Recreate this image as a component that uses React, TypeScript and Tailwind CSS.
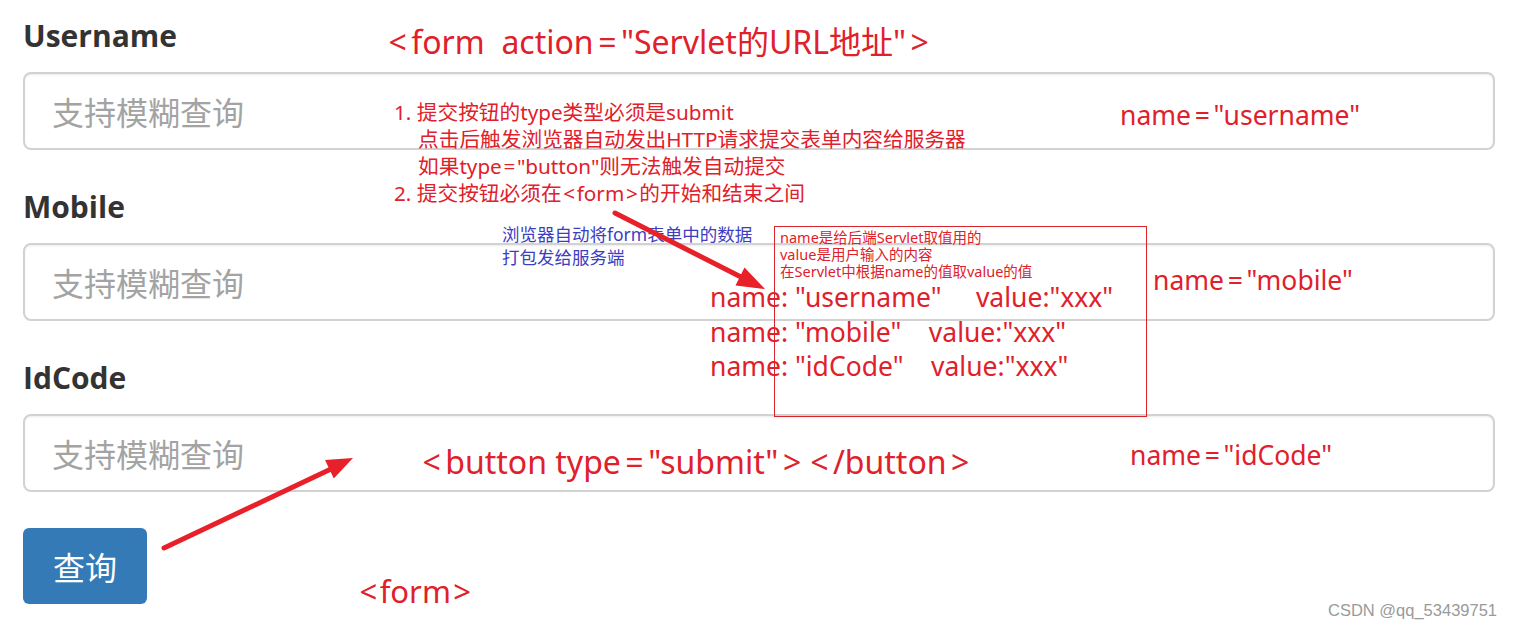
import React from 'react';

const RED = 'text-[#e0202a]';
const note = "[font-family:'Noto_Sans','Noto_Sans_CJK_SC',sans-serif]";

const fields = ['Username', 'Mobile', 'IdCode'];

function S({ c, wide }: { c: string; wide?: boolean }) {
  return <span className={wide ? 'mx-[0.14em]' : 'mx-[0.08em]'}>{c}</span>;
}

function Field({ label }: { label: string }) {
  return (
    <div>
      <label className="block h-[36px] mb-[18px] text-[30px] leading-[36px] font-bold text-[#333] [font-family:'Open_Sans',sans-serif]">
        {label}
      </label>
      <input
        type="text"
        placeholder="支持模糊查询"
        className="block w-full h-[78px] rounded-[8px] border-2 border-[#d2d2d2] bg-white pl-[27px] text-[32px] text-[#555] placeholder:text-[#a3a3a3] shadow-[inset_0_1px_2px_rgba(0,0,0,0.08)] outline-none [font-family:'Noto_Sans_CJK_SC',sans-serif]"
      />
    </div>
  );
}

function Arrows() {
  return (
    <svg className="absolute inset-0 pointer-events-none" width="1514" height="629">
      <line x1="615" y1="213" x2="741" y2="277" stroke="#e8202a" strokeWidth="5" strokeLinecap="round" />
      <polygon points="765,289 735.5,285.5 744.5,267.5" fill="#e8202a" />
      <line x1="164" y1="548" x2="331" y2="469" stroke="#e8202a" strokeWidth="5" strokeLinecap="round" />
      <polygon points="353,458 333.8,478.5 325,460" fill="#e8202a" />
    </svg>
  );
}

function NameTag({ name, className }: { name: string; className: string }) {
  return (
    <div className={`absolute text-[26.5px] leading-[36px] ${RED} ${note} ${className}`}>
      name<S c="=" wide />"{name}"
    </div>
  );
}

export default function App() {
  return (
    <div className="relative w-[1514px] h-[629px] bg-white overflow-hidden">
      {/* the form itself */}
      <form className="pl-[23px] pr-[19px] pt-[18px] flex flex-col gap-[39px]">
        {fields.map((f) => (
          <Field key={f} label={f} />
        ))}
        <div className="-mt-[3px]">
          <button
            type="submit"
            className="w-[124px] h-[76px] rounded-[6px] bg-[#337ab7] text-white text-[32px] [font-family:'Noto_Sans_CJK_SC',sans-serif]"
          >
            查询
          </button>
        </div>
      </form>

      {/* annotations drawn over the screenshot */}
      <div className={`absolute left-[384px] top-[21px] text-[32px] leading-[42px] whitespace-pre ${RED} ${note}`}>
        <S c="<" wide />form  action<S c="=" wide />"Servlet的URL地址"<S c=">" wide />
      </div>

      <div className={`absolute left-[394px] top-[99px] text-[20.7px] leading-[27px] whitespace-pre ${RED} ${note}`}>
        <div>1. 提交按钮的type类型必须是submit</div>
        <div className="pl-[24px]">点击后触发浏览器自动发出HTTP请求提交表单内容给服务器</div>
        <div className="pl-[24px]">如果type<S c="=" />"button"则无法触发自动提交</div>
        <div>2. 提交按钮必须在<S c="<" />form<S c=">" />的开始和结束之间</div>
      </div>

      <div className={`absolute left-[502px] top-[223px] text-[17.5px] leading-[23px] text-[#3d3dbf] ${note}`}>
        <div>浏览器自动将form表单中的数据</div>
        <div>打包发给服务端</div>
      </div>

      <div className="absolute left-[774px] top-[226px] w-[373px] h-[191px] border border-[#d9242c]" />
      <div className={`absolute left-[780px] top-[229px] text-[14.5px] leading-[17px] ${RED} ${note}`}>
        <div>name是给后端Servlet取值用的</div>
        <div>value是用户输入的内容</div>
        <div>在Servlet中根据name的值取value的值</div>
      </div>

      <div className={`absolute left-[710px] top-[280px] text-[26.5px] leading-[34.5px] whitespace-pre ${RED} ${note}`}>
        <div>{'name: "username"     value:"xxx"'}</div>
        <div>{'name: "mobile"    value:"xxx"'}</div>
        <div>{'name: "idCode"    value:"xxx"'}</div>
      </div>

      <NameTag name="username" className="left-[1120px] top-[97px]" />
      <NameTag name="mobile" className="left-[1153px] top-[262px]" />
      <NameTag name="idCode" className="left-[1130px] top-[437px]" />

      <div className={`absolute left-[418px] top-[441px] text-[32px] leading-[42px] whitespace-pre ${RED} ${note}`}>
        <S c="<" wide />button type<S c="=" wide />"submit"<S c=">" wide /><S c="<" wide />/button<S c=">" wide />
      </div>
      <div className={`absolute left-[357px] top-[571px] text-[31px] leading-[40px] ${RED} ${note}`}>
        <S c="<" />form<S c=">" />
      </div>

      <div className="absolute left-[1328px] top-[600px] text-[16.5px] leading-[20px] text-[#9a9a9a] [font-family:'Liberation_Sans',Arial,sans-serif]">
        CSDN @qq_53439751
      </div>

      <Arrows />
    </div>
  );
}
